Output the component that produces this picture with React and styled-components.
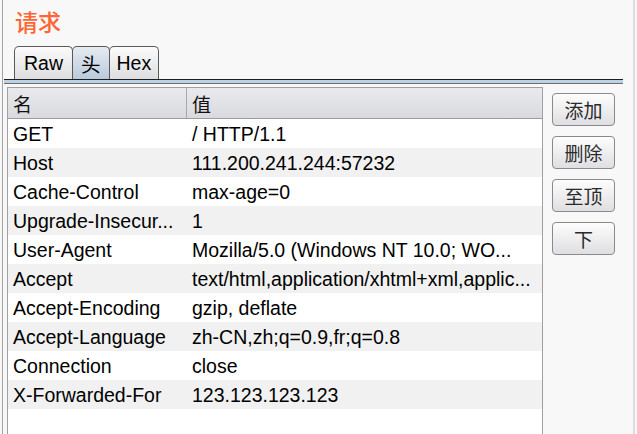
import React from "react";
import styled, { createGlobalStyle } from "styled-components";

const Global = createGlobalStyle`
  html, body { margin: 0; padding: 0; background: #f8f8f8; }
  #root { height: 100vh; }
`;

const Page = styled.div`
  height: 100vh;
  overflow: hidden;
  background: #f8f8f8;
  box-sizing: border-box;
  padding-left: 2px;
  width: 637px;
`;

const Frame = styled.div`
  box-sizing: border-box;
  width: 633px;
  height: 100%;
  border-left: 1px solid #a3a3a3;
  border-right: 2px solid #dcdcdc;
  display: flex;
  flex-direction: column;
`;

const Title = styled.div`
  font-family: "Noto Sans CJK SC", sans-serif;
  font-size: 23px;
  font-weight: 500;
  line-height: 28px;
  color: #ff6633;
  padding: 7px 0 0 12px;
  height: 36px;
  box-sizing: border-box;
`;

const TabBar = styled.div`
  display: flex;
  padding-left: 11px;
  margin-top: 10px;
`;

const Tab = styled.div`
  box-sizing: border-box;
  height: 33px;
  padding: 0 ${(p) => p.$pad}px;
  margin-left: ${(p) => (p.$first ? 0 : -1)}px;
  border: 1px solid #5a5a5a;
  border-bottom: none;
  border-radius: 5px 5px 0 0;
  display: flex;
  align-items: center;
  font-family: "Liberation Sans", "Noto Sans CJK SC", sans-serif;
  font-size: 19.5px;
  color: #000;
  background: ${(p) =>
    p.$active
      ? "linear-gradient(#e6ebf1, #b9cadb)"
      : "linear-gradient(#fbfbfb, #dedee0)"};
`;

const Divider = styled.div`
  margin-left: 1px;
  width: 619px;
  height: 3px;
  background: #bdd1e5;
  border-top: 1px solid #1e1e1e;
  border-bottom: 1px solid #6c6c6c;
`;

const Body = styled.div`
  flex: 1;
  display: flex;
  align-items: flex-start;
  padding: 3px 0 0 4px;
  gap: 9px;
  min-height: 0;
`;

const TableBox = styled.div`
  box-sizing: border-box;
  width: 536px;
  height: 400px;
  border: 1px solid #a0a0a0;
  background: #fff;
  font-family: "Liberation Sans", sans-serif;
  font-size: 19.5px;
  color: #000;
`;

const HeaderRow = styled.div`
  display: grid;
  grid-template-columns: 179px 1fr;
  height: 31px;
  box-sizing: border-box;
  border-bottom: 1px solid #9c9c9c;
  background: linear-gradient(#eaeaee, #d9dadf);
`;

const HeaderCell = styled.div`
  display: flex;
  align-items: center;
  padding-left: 5px;
  font-family: "Noto Sans CJK SC", serif;
  font-size: 19px;
  color: #111;
  border-right: ${(p) => (p.$last ? "none" : "1px solid #a8a8ae")};
`;

const Row = styled.div`
  display: grid;
  grid-template-columns: 179px minmax(0, 1fr);
  height: 29px;
  background: ${(p) => (p.$alt ? "#f1f1f1" : "#ffffff")};
`;

const Cell = styled.div`
  display: flex;
  align-items: center;
  padding: 2px 4px 0 5px;
  box-sizing: border-box;
  min-width: 0;
  overflow: hidden;
  white-space: nowrap;
`;

const ButtonColumn = styled.div`
  display: flex;
  flex-direction: column;
  gap: 10px;
  padding-top: 6px;
`;

const Button = styled.button`
  box-sizing: border-box;
  width: 63px;
  height: 33px;
  border: 1px solid #8a8a8a;
  border-radius: 4px;
  background: linear-gradient(#fdfdfd, #dfdfe3);
  font-family: "Noto Sans CJK SC", serif;
  font-size: 19px;
  line-height: 1;
  color: #2a2a2a;
  padding: 0;
  cursor: pointer;
`;

/* values as the table shows them, already shortened to the column width */
const rows = [
  ["GET", "/ HTTP/1.1"],
  ["Host", "111.200.241.244:57232"],
  ["Cache-Control", "max-age=0"],
  ["Upgrade-Insecur...", "1"],
  ["User-Agent", "Mozilla/5.0 (Windows NT 10.0; WO..."],
  ["Accept", "text/html,application/xhtml+xml,applic..."],
  ["Accept-Encoding", "gzip, deflate"],
  ["Accept-Language", "zh-CN,zh;q=0.9,fr;q=0.8"],
  ["Connection", "close"],
  ["X-Forwarded-For", "123.123.123.123"],
];

export default function App() {
  return (
    <>
      <Global />
      <Page>
        <Frame>
          <Title>请求</Title>
          <TabBar>
            <Tab $first $pad={9}>Raw</Tab>
            <Tab $active $pad={8}>头</Tab>
            <Tab $pad={7}>Hex</Tab>
          </TabBar>
          <Divider />
          <Body>
            <TableBox>
              <HeaderRow>
                <HeaderCell>名</HeaderCell>
                <HeaderCell $last>值</HeaderCell>
              </HeaderRow>
              {rows.map(([k, v], i) => (
                <Row key={k} $alt={i % 2 === 1}>
                  <Cell>{k}</Cell>
                  <Cell>{v}</Cell>
                </Row>
              ))}
            </TableBox>
            <ButtonColumn>
              <Button>添加</Button>
              <Button>删除</Button>
              <Button>至顶</Button>
              <Button>下</Button>
            </ButtonColumn>
          </Body>
        </Frame>
      </Page>
    </>
  );
}
